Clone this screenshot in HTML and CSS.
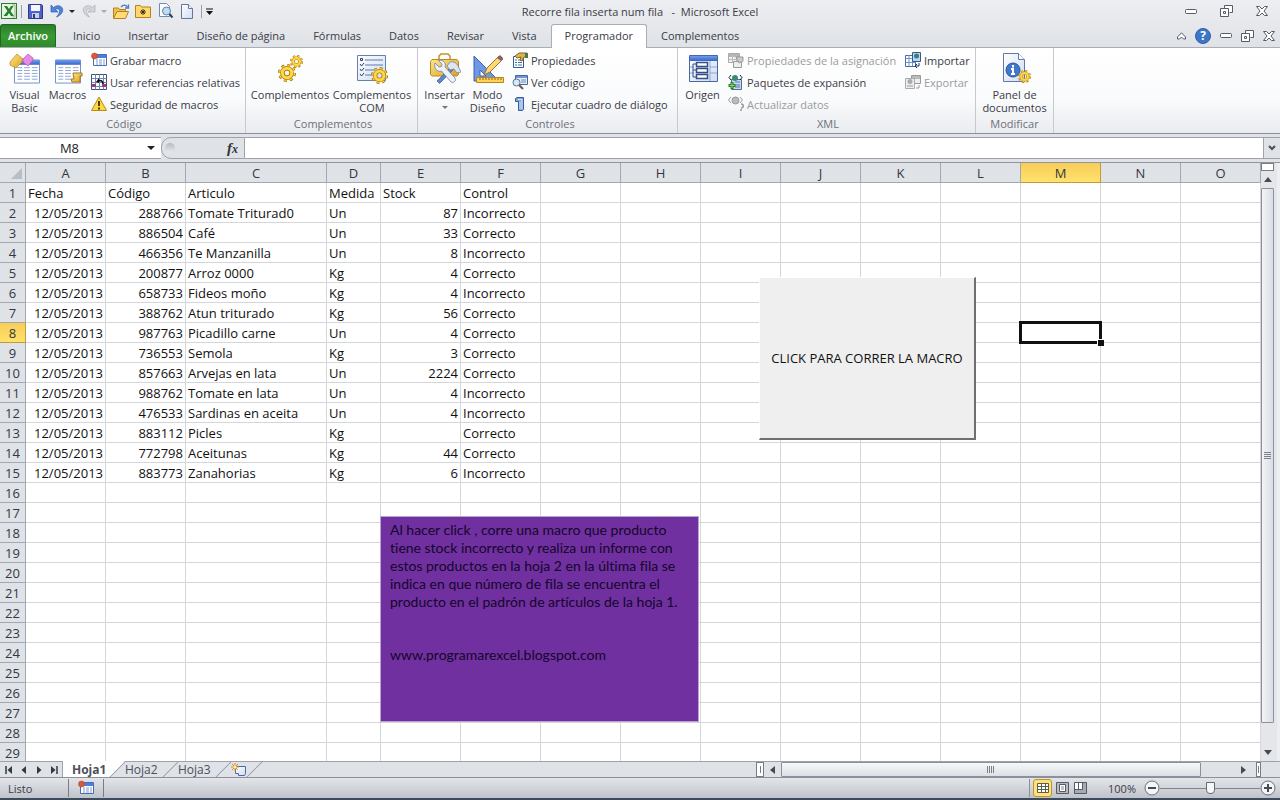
FILE: index.html
```html
<!DOCTYPE html>
<html lang="es">
<head>
  <meta charset="UTF-8">
  <meta name="viewport" content="width=device-width, initial-scale=1.0">
  <title>Recorre fila inserta num fila - Microsoft Excel</title>
  <link rel="stylesheet" href="styles.css">
</head>
<body>
  <!-- Shared icon shapes -->
  <svg class="defs" aria-hidden="true">
    <defs>
      <linearGradient id="blueBar" x1="0" y1="0" x2="0" y2="1"><stop offset="0" stop-color="#6f9df0"/><stop offset="1" stop-color="#3765c4"/></linearGradient>
      <linearGradient id="paper" x1="0" y1="0" x2="1" y2="1"><stop offset="0" stop-color="#ffffff"/><stop offset="1" stop-color="#cfdcf2"/></linearGradient>
      <linearGradient id="gold" x1="0" y1="0" x2="1" y2="1"><stop offset="0" stop-color="#ffe68a"/><stop offset="1" stop-color="#dba11f"/></linearGradient>
      <symbol id="gear" viewBox="0 0 18 18">
        <circle cx="9" cy="9" r="7" fill="none" stroke="#b07d0c" stroke-width="4" stroke-dasharray="2.8 2.7"/>
        <circle cx="9" cy="9" r="7" fill="none" stroke="#ffd84a" stroke-width="2" stroke-dasharray="2.2 3.3" stroke-dashoffset="-.3"/>
        <circle cx="9" cy="9" r="4.6" fill="none" stroke="#b07d0c" stroke-width="4.6"/>
        <circle cx="9" cy="9" r="4.7" fill="none" stroke="#ffd84a" stroke-width="3"/>
      </symbol>
      <symbol id="sheet" viewBox="0 0 28 26">
        <path d="M1 1h26v24H1z" fill="#fff" stroke="#7390c4"/>
        <path d="M1 1h26v5H1z" fill="url(#blueBar)"/>
        <path d="M4 9h5M11 9h6M19 9h6M4 12h5M11 12h6M19 12h6M4 15h5M11 15h6M19 15h6M4 18h5M11 18h6M19 18h6M4 21h5M11 21h6M19 21h6" stroke="#8aa3d6"/>
      </symbol>
      <symbol id="record" viewBox="0 0 16 16">
        <path d="M2.5 2.5h13v11h-13z" fill="#fff" stroke="#4b6cb0"/>
        <path d="M3 3h12v3H3z" fill="#4c7fdd"/>
        <path d="M5 8h2M8 8h3M12 8h2M5 10h2M8 10h3M12 10h2M5 12h2M8 12h3M12 12h2" stroke="#7d9ad8"/>
        <circle cx="3.5" cy="4" r="3" fill="#d9593a" stroke="#b7482c" stroke-width=".6"/>
      </symbol>
      <symbol id="restore" viewBox="0 0 13 12">
        <path d="M4.500 3.500v-3h8v7h-3" fill="#fff" stroke="#555b6b"/>
        <path d="M.5 3.500h8v8h-8z" fill="#fff" stroke="#555b6b"/>
        <path d="M3.500 6.500h2v2h-2z" fill="none" stroke="#555b6b"/>
      </symbol>
      <symbol id="cross" viewBox="0 0 12 10">
        <path d="M.5.5h3L6 3 8.500.5h3L8 5l3.500 4.500h-3L6 7 3.500 9.500h-3L4 5z" fill="#fff" stroke="#555b6b"/>
      </symbol>
      <symbol id="minimize" viewBox="0 0 12 5">
        <rect x=".5" y=".5" width="11" height="4" rx="1" fill="#fff" stroke="#555b6b"/>
      </symbol>
    </defs>
  </svg>

  <header class="titlebar">
    <div class="quick">
      <svg class="app-icon" width="16" height="16" viewBox="0 0 16 16"><rect x=".5" y=".5" width="15" height="15" fill="#e6f3e2" stroke="#2e7d32"/><path d="M11 2h3v12h-3" fill="none" stroke="#8cc084"/><path d="M3 3h3l2 3 2-3h2.500L9.500 8l3.500 5h-3L8 10l-2 3H2.500L6.500 8z" fill="#23802b"/></svg>
      <span class="sep"></span>
      <button class="save" aria-label="Guardar"><svg width="15" height="15" viewBox="0 0 15 15"><path d="M.5.5h13l1 1v13H.5z" fill="#5061c9" stroke="#2d3a8c"/><path d="M3 1h9v6H3z" fill="#f3f6ff"/><path d="M4 9h7v5H4z" fill="#c9d0ea"/><path d="M5 10h2v4H5z" fill="#2d3a8c"/></svg></button>
      <button class="undo" aria-label="Deshacer"><svg width="14" height="14" viewBox="0 0 14 14"><path d="M1 1v7h7L5.500 5.500C7.500 4 9.800 5 9.500 7.500 9.300 9.500 8 11 6.500 13c4-1.500 6.500-4.500 6.200-7.500C12.300 1.500 7 .5 3.500 3.500z" fill="#4f84d9" stroke="#2f5fb5" stroke-width=".7"/></svg></button>
      <span class="caret"></span>
      <button class="redo" aria-label="Rehacer"><svg width="14" height="14" viewBox="0 0 14 14"><path d="M13 1v7H6l2.500-2.500C6.500 4 4.200 5 4.500 7.500 4.700 9.500 6 11 7.500 13 3.500 11.500 1 8.500 1.300 5.500 1.700 1.500 7 .5 10.500 3.500z" fill="#d2d5da" stroke="#a9adb4" stroke-width=".7"/></svg></button>
      <span class="caret muted"></span>
      <button class="open" aria-label="Abrir"><svg width="17" height="15" viewBox="0 0 17 15"><path d="M.5 14V4h5l1 1.500h6V8" fill="#f0c04b" stroke="#b4831c"/><path d="M.5 14.500 4 7.500h11.500l-3 7z" fill="#ffdc78" stroke="#b4831c"/><path d="M8 3c2-2.500 5-2.500 6.500 0M15.500.500v3.500H12" fill="none" stroke="#4a7cc9" stroke-width="1.300"/></svg></button>
      <button class="folder" aria-label="Favoritos"><svg width="16" height="14" viewBox="0 0 16 14"><path d="M.5 13.500V1.500h5l1 1.500h9v10.500z" fill="#ffd76a" stroke="#b4831c"/><path d="M8 5v6M5 8h6M6 6l4 4M10 6l-4 4" stroke="#3a2a10"/></svg></button>
      <button class="preview" aria-label="Vista preliminar"><svg width="16" height="16" viewBox="0 0 16 16"><path d="M1.500.5h7l3 3v10h-10z" fill="#fff" stroke="#7489ab"/><circle cx="8.500" cy="8" r="4" fill="#bfdcf5" stroke="#5d7fae"/><path d="m11.500 11 3 3.500" stroke="#34445e" stroke-width="2"/></svg></button>
      <button class="blank" aria-label="Nuevo"><svg width="12" height="15" viewBox="0 0 12 15"><path d="M.5.500h7l4 4v10H.5z" fill="url(#paper)" stroke="#62779b"/><path d="M7.500.5v4h4" fill="#fff" stroke="#62779b"/></svg></button>
      <span class="sep"></span>
      <button class="custom" aria-label="Personalizar"><svg width="7" height="7" viewBox="0 0 7 7"><path d="M0 1h7" stroke="#111"/><path d="M0 3h7L3.500 7z" fill="#111"/></svg></button>
    </div>
    <h1>Recorre fila inserta num fila &nbsp; - &nbsp;Microsoft Excel</h1>
    <div class="window-buttons">
      <button aria-label="Minimizar"><svg width="12" height="5"><use href="#minimize"/></svg></button>
      <button aria-label="Restaurar"><svg width="13" height="12"><use href="#restore"/></svg></button>
      <button aria-label="Cerrar"><svg width="12" height="10"><use href="#cross"/></svg></button>
    </div>
  </header>

  <nav class="tabs">
    <button class="file-tab">Archivo</button>
    <button>Inicio</button>
    <button>Insertar</button>
    <button>Diseño de página</button>
    <button>Fórmulas</button>
    <button>Datos</button>
    <button>Revisar</button>
    <button>Vista</button>
    <button class="active">Programador</button>
    <button>Complementos</button>
    <div class="book-buttons">
      <button aria-label="Minimizar cinta"><svg width="9" height="8" viewBox="0 0 9 8"><path d="M.5 5 4.500.8 8.500 5v2h-2l-2-2-2 2h-2z" fill="#fff" stroke="#555b6b"/></svg></button>
      <button class="help" aria-label="Ayuda">?</button>
      <button aria-label="Minimizar libro"><svg width="12" height="5"><use href="#minimize"/></svg></button>
      <button aria-label="Restaurar libro"><svg width="13" height="12"><use href="#restore"/></svg></button>
      <button aria-label="Cerrar libro"><svg width="12" height="10"><use href="#cross"/></svg></button>
    </div>
  </nav>

  <section class="ribbon">
    <div class="group codigo">
      <div class="items">
        <button class="big"><svg width="32" height="32" viewBox="0 0 32 32"><use href="#sheet" x="4" y="6" width="28" height="25"/><path d="m1 9 7-8 6 5-1 3-6 6-6-3z" fill="url(#gold)" stroke="#b58320" stroke-width=".7"/><path d="m14 6 5-5 5 4v2l-5 6-5-4z" fill="#e58be6" stroke="#b355b8" stroke-width=".7"/></svg>Visual<br>Basic</button>
        <button class="big"><svg width="32" height="32" viewBox="0 0 32 32"><use href="#sheet" x="2" y="6" width="28" height="25"/><path d="M21 20h9v3h-2v6h-8l-1-3h3z" fill="url(#gold)" stroke="#a87820"/></svg>Macros</button>
        <div class="small-col">
          <button><svg width="16" height="16"><use href="#record"/></svg>Grabar macro</button>
          <button><svg width="16" height="16" viewBox="0 0 16 16"><path d="M.5.5h15v15H.5z" fill="#fff" stroke="#3e5078"/><path d="M.5 4.500h15M.5 8.500h15M.5 12.500h15M4.500.5v15M8.500.5v15M12.500.5v15" stroke="#7086b5"/><path d="M1 10h4v3H1zM11 10h4v3h-4z" fill="#993f76"/><path d="M7 7c3-1 5 0 5 3" fill="none" stroke="#111" stroke-width="1.500"/><path d="m5 8 3-4v5z" fill="#111"/></svg>Usar referencias relativas</button>
          <button><svg width="16" height="16" viewBox="0 0 16 16"><path d="M8 1 15.500 14.500H.5z" fill="#ffd83d" stroke="#b88b12" stroke-linejoin="round"/><path d="M8 5v5M8 11.500v2" stroke="#3a2c00" stroke-width="1.800"/></svg>Seguridad de macros</button>
        </div>
      </div>
      <h2>Código</h2>
    </div>
    <div class="group complementos">
      <div class="items">
        <button class="big wide"><svg width="32" height="32" viewBox="0 0 32 32"><use href="#gear" x="16" y="2" width="13" height="13"/><use href="#gear" x="4" y="11" width="18" height="18"/></svg>Complementos</button>
        <button class="big wide"><svg width="32" height="32" viewBox="0 0 32 32"><path d="M1.500 2.500h28v25h-28z" fill="url(#paper)" stroke="#6680ac"/><path d="M9 7h18M9 12h18M9 17h12M9 22h8" stroke="#5c79b0"/><path d="M4.500 5.500h2v2h-2zM4 11l1.500 2L8 10M4 16l1.500 2L8 15M4 21l1.500 2L8 20" fill="none" stroke="#2c4068"/><use href="#gear" x="15" y="14" width="17" height="17"/></svg>Complementos<br>COM</button>
      </div>
      <h2>Complementos</h2>
    </div>
    <div class="group controles">
      <div class="items">
        <button class="big"><svg width="32" height="32" viewBox="0 0 32 32"><path d="M10 6V3l2-2h7l2 2v3" fill="none" stroke="#c39226" stroke-width="1.500"/><path d="M3 6.500h25l1.500 2v13l-1.500 1.500H3L1.500 21.500v-13z" fill="url(#gold)" stroke="#bd891f"/><path d="m8 28 14-14 2.500 2.500-14 14z" fill="#5f86c8" stroke="#3f5c93" stroke-width=".7"/><path d="m18 13 3-4c4-1 7 1 9 6l2 4-4 1-3-4-4 1z" fill="#dfe5f0" stroke="#71829f" stroke-width=".8"/><path d="M6 10l4 4 2.500-.5.5-2.500-3.500-3.500c4.500-1 8 2 6.500 6.500L26 25c1.500 3-1.500 5.500-4 4L12.500 18C8 19.500 4.500 15 6 10z" fill="#edf2fa" stroke="#71829f" stroke-width=".8"/></svg>Insertar<span class="caret gray"></span></button>
        <button class="big"><svg width="32" height="32" viewBox="0 0 32 32"><path d="M2 3 27 28H2zM8 17v6h6z" fill="#6f98e4" fill-rule="evenodd" stroke="#3b63b0"/><path d="M4.500 24.500h27v5h-27z" fill="#ffd156" stroke="#ba861c"/><path d="M8 25v2M11 25v2M14 25v2M17 25v2M20 25v2M23 25v2M26 25v2M29 25v2" stroke="#8e6514"/><path d="m12 22 3-7L27 3l4 3-13 13z" fill="#ffd775" stroke="#96732b"/><path d="m25 5 4 3 2-3-3-3z" fill="#84616a"/></svg>Modo<br>Diseño</button>
        <div class="small-col">
          <button><svg width="16" height="16" viewBox="0 0 16 16"><path d="M1.500 4.500h10v11h-10z" fill="#fff" stroke="#345b89"/><path d="M3 8h2M6 8h4M3 10.500h2M6 10.500h4M3 13h2M6 13h4" stroke="#426d9f"/><path d="M3 4 7 1h8v4h-3l-2 4-2-1 1-3-4 1z" fill="#e2b24b" stroke="#80632a"/><path d="M13 1h3v5h-3z" fill="#467b4b"/></svg>Propiedades</button>
          <button><svg width="16" height="16" viewBox="0 0 16 16"><path d="M3.500 1.500h12v9h-12z" fill="#e8effb" stroke="#466699"/><path d="M4 2h11v2H4z" fill="#6f96d5"/><path d="M9 6h5M9 8h5" stroke="#6987b8"/><circle cx="4.500" cy="8.500" r="3.500" fill="#d7e9fa" stroke="#5b7498"/><path d="m7 11 4 4" stroke="#705343" stroke-width="2"/></svg>Ver código</button>
          <button><svg width="16" height="16" viewBox="0 0 16 16"><path d="M3.500 2.500 5 1.500h6.500v12l-1.500 1H6.500v-9h-3z" fill="#7da3dd" stroke="#3a5c94"/><path d="M8 5.500v8M6 3.500h4v10" fill="none" stroke="#dce8fa"/></svg>Ejecutar cuadro de diálogo</button>
        </div>
      </div>
      <h2>Controles</h2>
    </div>
    <div class="group xml">
      <div class="items">
        <button class="big"><svg width="32" height="32" viewBox="0 0 32 32"><path d="M2.500 2.500h28v26h-28z" fill="url(#paper)" stroke="#4767a5"/><path d="M3 3h27v5H3z" fill="url(#blueBar)"/><path d="M23 8v20M23 14h7M23 20h7M3 14h4M3 20h4" stroke="#8ca6d5"/><path d="M9.500 9.500h11v4h-11zM9.500 15.500h11v4h-11zM9.500 21.500h11v4h-11z" fill="#fff" stroke="#344f83" stroke-width="1.500"/><path d="M6 11v13M6 11h3M6 17h3M6 24h3" stroke="#344f83"/></svg>Origen</button>
        <div class="small-col xml-left">
          <button disabled><svg width="16" height="16" viewBox="0 0 16 16"><path d="M.5 1.500h11v9H.5z" fill="#f1f1f1" stroke="#aaa"/><path d="M1 2h10v3H1z" fill="#b5b5b5"/><path d="M1 7.500h10M4.500 2v8M8.500 2v8" stroke="#bbb"/><path d="M5.500 9.500h8v6h-8z" fill="#eee" stroke="#9b9b9b"/><path d="M8 5h7v4l-4 2z" fill="#ccc" stroke="#999"/></svg>Propiedades de la asignación</button>
          <button><svg width="16" height="16" viewBox="0 0 16 16"><path d="M3.500 5.500h10v10h-10z" fill="#c7d8f1" stroke="#4d6c9d"/><path d="M7 8h5M7 11h5M7 13h5" stroke="#5a78ab"/><circle cx="7" cy="4" r="3" fill="#388c77"/><path d="M3 1 1 3.500 3 6M12 1l2 2.500L12 6" fill="none" stroke="#222"/><path d="M4 8v7M.5 11.500h7" stroke="#287b27" stroke-width="3"/><path d="M4 9v5M1.500 11.500h5" stroke="#8edb55"/></svg>Paquetes de expansión</button>
          <button disabled><svg width="16" height="16" viewBox="0 0 16 16"><path d="M3 1 .5 4 3 7M12 1l2.500 3L12 7" fill="none" stroke="#999"/><circle cx="7.500" cy="4.500" r="3.500" fill="#bbb" stroke="#999"/><path d="M13 8c3 0 3 4 0 4M13 13v2" fill="none" stroke="#999" stroke-width="1.500"/></svg>Actualizar datos</button>
        </div>
        <div class="small-col">
          <button><svg width="16" height="16" viewBox="0 0 16 16"><path d="M.5 3.500h10v11H.5z" fill="#fff" stroke="#426da8"/><path d="M.5 6.500h10M.5 10.500h10M4 3v11M7.500 3v11" stroke="#6c96ce"/><path d="M7.500.5h8v9h-8z" fill="#bed6ef" stroke="#325a8f"/><circle cx="11.500" cy="4" r="2.500" fill="#377f79"/><path d="M14 11v3h-4M12 12l-2 2 2 2" fill="none" stroke="#1e3358"/></svg>Importar</button>
          <button disabled><svg width="16" height="16" viewBox="0 0 16 16"><path d="M6.500 1.500h9v8h-9z" fill="#eee" stroke="#999"/><path d="M7 2h8v3H7z" fill="#bbb"/><path d="M.5 4.500h9v10h-9z" fill="#eee" stroke="#aaa"/><circle cx="5" cy="7.500" r="2.500" fill="#aaa"/><path d="M2 12h6M14 11v3h-3" fill="none" stroke="#999"/></svg>Exportar</button>
        </div>
      </div>
      <h2>XML</h2>
    </div>
    <div class="group modificar">
      <div class="items">
        <button class="big panel"><svg width="32" height="32" viewBox="0 0 32 32"><path d="M4.500.5h15l6 6v22h-21z" fill="url(#paper)" stroke="#607ba8"/><path d="M19.500.5v6h6" fill="#fff" stroke="#607ba8"/><circle cx="14" cy="17" r="7" fill="#3f78cc" stroke="#2c559c"/><path d="M14 12v2.500M12 16h2v5M12 21h4" fill="none" stroke="#fff" stroke-width="2"/><use href="#gear" x="19" y="17" width="13" height="13"/></svg>Panel de<br>documentos</button>
      </div>
      <h2>Modificar</h2>
    </div>
  </section>

  <div class="formula-bar">
    <div class="name-box">
      <input type="text" value="M8" aria-label="Cuadro de nombres">
      <span class="caret"></span>
    </div>
    <div class="fx"><span class="knob"></span><button aria-label="Insertar función"><i>f</i><i class="x">x</i></button></div>
    <input class="formula" type="text" aria-label="Barra de fórmulas">
    <button class="expand" aria-label="Expandir"><svg width="8" height="6" viewBox="0 0 8 6"><path d="m1 1 3 3 3-3" fill="none" stroke="#4a4f58" stroke-width="2"/></svg></button>
  </div>

  <main class="workbook">
    <div class="grid-area" id="gridArea">
      <table class="grid">
        <colgroup id="cols"></colgroup>
        <thead><tr id="letters"></tr></thead>
        <tbody id="rows"></tbody>
      </table>
      <button class="macro-button">CLICK PARA CORRER LA MACRO</button>
      <div class="note">
        <p>Al hacer click , corre una macro que producto<br>tiene stock incorrecto y realiza un informe con<br>estos productos en la hoja 2 en la última fila se<br>indica en que número de fila se encuentra el<br>producto en el padrón de artículos de la hoja 1.</p>
        <p>www.programarexcel.blogspot.com</p>
      </div>
    </div>
    <div class="v-scroll">
      <span class="split"></span>
      <button aria-label="Arriba"><span class="arrow up"></span></button>
      <div class="thumb"><span class="grip"></span></div>
      <button aria-label="Abajo"><span class="arrow down"></span></button>
    </div>
  </main>

  <div class="sheet-bar">
    <div class="sheet-nav">
      <button aria-label="Primera hoja"><svg width="8" height="8" viewBox="0 0 8 8"><path d="M1 0v8" stroke="#333a45" stroke-width="1.500"/><path d="M7 0v8L2.500 4z" fill="#333a45"/></svg></button>
      <button aria-label="Hoja anterior"><svg width="8" height="8" viewBox="0 0 8 8"><path d="M6 0v8L1.500 4z" fill="#333a45"/></svg></button>
      <button aria-label="Hoja siguiente"><svg width="8" height="8" viewBox="0 0 8 8"><path d="M2 0v8l4.500-4z" fill="#333a45"/></svg></button>
      <button aria-label="Última hoja"><svg width="8" height="8" viewBox="0 0 8 8"><path d="M7 0v8" stroke="#333a45" stroke-width="1.500"/><path d="M1 0v8l4.500-4z" fill="#333a45"/></svg></button>
    </div>
    <button class="sheet-tab active">Hoja1</button>
    <button class="sheet-tab">Hoja2</button>
    <button class="sheet-tab">Hoja3</button>
    <button class="sheet-tab new" aria-label="Insertar hoja"><svg width="16" height="14" viewBox="0 0 16 14"><path d="M4.500 3.500h10v7l-1 2h-6v-2h-3z" fill="url(#paper)" stroke="#4a6aa5"/><path d="M4 0v8M0 4h8M1 1l6 6M7 1 1 7" stroke="#d98f22"/><circle cx="4" cy="4" r="1.500" fill="#fff0a8"/></svg></button>
    <div class="h-scroll">
      <span class="split"></span>
      <button aria-label="Izquierda"><span class="arrow left"></span></button>
      <div class="thumb"><span class="grip"></span></div>
      <button class="right-button" aria-label="Derecha"><span class="arrow right"></span></button>
      <span class="split end"></span>
    </div>
  </div>

  <footer class="status">
    <span class="ready">Listo</span>
    <button class="record" aria-label="Grabar macro"><svg width="16" height="16"><use href="#record"/></svg></button>
    <div class="views">
      <button class="on" aria-label="Normal"><svg width="12" height="10" viewBox="0 0 12 10"><path d="M.5.500h11v9H.5zM.5 3.500h11M.5 6.500h11M4.500.5v9M8.500.5v9" fill="#fff" stroke="#5a5f4c"/></svg></button>
      <button aria-label="Diseño de página"><svg width="13" height="12" viewBox="0 0 13 12"><path d="M.5.5h12v11H.5z" fill="#b5b9c1" stroke="#555b66"/><path d="M3.500 2.500h6v7h-6z" fill="#fff" stroke="#555b66"/><path d="M5 5h3M5 7h3" stroke="#888"/></svg></button>
      <button aria-label="Salto de página"><svg width="13" height="12" viewBox="0 0 13 12"><path d="M.5.5h12v11H.5z" fill="#a5aab3" stroke="#555b66"/><path d="M1 1h3v6H1zM5 1h3v6H5z" fill="#fff"/><path d="M4.500 1v6M8.500 1v6.500H1" fill="none" stroke="#555b66"/></svg></button>
    </div>
    <span class="percent">100%</span>
    <button class="round" aria-label="Alejar"><svg width="16" height="16" viewBox="0 0 16 16"><circle cx="8" cy="8" r="7" fill="#f4f5f7" stroke="#6a707b"/><path d="M4 8h8" stroke="#444a55" stroke-width="2"/></svg></button>
    <input class="zoom" type="range" min="0" max="100" value="50" aria-label="Zoom">
    <button class="round" aria-label="Acercar"><svg width="16" height="16" viewBox="0 0 16 16"><circle cx="8" cy="8" r="7" fill="#f4f5f7" stroke="#6a707b"/><path d="M4 8h8M8 4v8" stroke="#444a55" stroke-width="2"/></svg></button>
  </footer>

  <script>
    const data = [
      ["Fecha", "Código", "Articulo", "Medida", "Stock", "Control"],
      ["12/05/2013", 288766, "Tomate Triturad0", "Un", 87, "Incorrecto"],
      ["12/05/2013", 886504, "Café", "Un", 33, "Correcto"],
      ["12/05/2013", 466356, "Te Manzanilla", "Un", 8, "Incorrecto"],
      ["12/05/2013", 200877, "Arroz 0000", "Kg", 4, "Correcto"],
      ["12/05/2013", 658733, "Fideos moño", "Kg", 4, "Incorrecto"],
      ["12/05/2013", 388762, "Atun triturado", "Kg", 56, "Correcto"],
      ["12/05/2013", 987763, "Picadillo carne", "Un", 4, "Correcto"],
      ["12/05/2013", 736553, "Semola", "Kg", 3, "Correcto"],
      ["12/05/2013", 857663, "Arvejas en lata", "Un", 2224, "Correcto"],
      ["12/05/2013", 988762, "Tomate en lata", "Un", 4, "Incorrecto"],
      ["12/05/2013", 476533, "Sardinas en aceita", "Un", 4, "Incorrecto"],
      ["12/05/2013", 883112, "Picles", "Kg", "", "Correcto"],
      ["12/05/2013", 772798, "Aceitunas", "Kg", 44, "Correcto"],
      ["12/05/2013", 883773, "Zanahorias", "Kg", 6, "Incorrecto"]
    ];
    const selected = { col: 12, row: 7 };
    const widths = { 2: "col-wide", 3: "col-narrow" };

    // Fill the visible area with rows and columns
    const area = document.getElementById("gridArea");
    const colCount = Math.max(13, Math.ceil((area.clientWidth - 26 - 35) / 80));
    const rowCount = Math.max(15, Math.ceil((area.clientHeight - 20) / 20));

    let cols = '<col class="col-head">';
    let letters = '<th class="corner"></th>';
    for (let c = 0; c < colCount; c++) {
      cols += `<col class="${widths[c] || "col"}">`;
      letters += `<th class="${c === selected.col ? "on" : ""}">${String.fromCharCode(65 + c)}</th>`;
    }
    document.getElementById("cols").innerHTML = cols;
    document.getElementById("letters").innerHTML = letters;

    let rows = "";
    for (let r = 0; r < rowCount; r++) {
      rows += `<tr><th class="${r === selected.row ? "on" : ""}">${r + 1}</th>`;
      for (let c = 0; c < colCount; c++) {
        const value = data[r] && data[r][c] !== undefined ? data[r][c] : "";
        const right = r > 0 && (c === 0 || typeof value === "number");
        const cursor = r === selected.row && c === selected.col;
        rows += `<td class="${right ? "num" : ""}${cursor ? "cursor" : ""}">${value}</td>`;
      }
      rows += "</tr>";
    }
    document.getElementById("rows").innerHTML = rows;
  </script>
</body>
</html>
```
FILE: styles.css
```css
* {
  box-sizing: border-box;
}
body {
  margin: 0;
  height: 100vh;
  display: flex;
  flex-direction: column;
  overflow: hidden;
  font-family: "Open Sans", "Noto Sans", sans-serif;
  font-size: 11px;
  color: #3b3b47;
  background: #dfe2e7;
}
button {
  font: inherit;
  color: inherit;
  background: none;
  border: 0;
  padding: 0;
  margin: 0;
}
h1, h2, p {
  margin: 0;
  font-weight: normal;
}
svg {
  display: block;
  flex: none;
}
.defs {
  position: absolute;
  width: 0;
  height: 0;
}
.caret {
  width: 0;
  border: 4px solid transparent;
  border-top-color: #222;
  border-bottom: 0;
}
.quick .caret {
  border-width: 3px 3px 0;
}
.caret.muted {
  border-top-color: #a4a8af;
}
.caret.gray {
  border-width: 3px 3px 0;
  border-top-color: #777;
  margin: 5px auto 0;
}

/* Title bar */
.titlebar {
  display: grid;
  grid-template-columns: 1fr auto 1fr;
  align-items: center;
  height: 24px;
  flex: none;
  padding-bottom: 2px;
  background: linear-gradient(#eceef1, #e6e8ec);
}
.titlebar h1 {
  font-size: 11px;
}
.quick {
  display: flex;
  align-items: center;
  padding-left: 1px;
}
.sep {
  width: 1px;
  height: 13px;
  background: #9a9fa8;
}
.app-icon {
  margin-right: 4px;
}
.save {
  margin-left: 6px;
}
.undo {
  margin: 0 5px 0 7px;
}
.redo {
  margin: 0 5px 0 7px;
}
.open {
  margin-left: 6px;
}
.folder {
  margin-left: 5px;
}
.preview {
  margin-left: 7px;
}
.blank {
  margin: 0 8px 0 7px;
}
.custom {
  margin-left: 4px;
}
.window-buttons {
  display: flex;
  align-items: center;
  justify-content: flex-end;
  gap: 23px;
  padding-right: 12px;
}

/* Tabs */
.tabs {
  display: flex;
  height: 24px;
  flex: none;
  background: linear-gradient(#e6e8ec, #dfe2e6);
  border-bottom: 1px solid #a9adb5;
}
.tabs > button {
  padding: 0 14px;
  height: 23px;
}
.tabs > .file-tab {
  width: 56px;
  padding: 0 0 2px;
  margin-right: 3px;
  color: #fff;
  font-weight: 600;
  background: linear-gradient(#2d7d2b, #3a9a33 50%, #2f8a2a);
  border: 1px solid #1f6a23;
  border-bottom: 0;
  border-radius: 3px 3px 0 0;
}
.tabs > .active {
  height: 24px;
  padding: 0 13px 2px;
  background: #fff;
  border: 1px solid #a9adb5;
  border-bottom: 0;
  border-radius: 3px 3px 0 0;
}
.book-buttons {
  display: flex;
  align-items: center;
  gap: 9px;
  margin-left: auto;
  padding-right: 5px;
}
.help {
  width: 16px;
  height: 16px;
  border-radius: 50%;
  background: #3c77c7;
  border: 1px solid #2f60a8;
  color: #fff;
  font-size: 12px;
  font-weight: 700;
  line-height: 14px;
}

/* Ribbon */
.ribbon {
  display: flex;
  height: 86px;
  flex: none;
  background: linear-gradient(#fff, #fafbfc 60%, #e9ebef);
  border-bottom: 1px solid #8b909a;
}
.group {
  display: flex;
  flex-direction: column;
  border-right: 1px solid #c6c9cf;
  padding: 1px 0 0 3px;
}
.group h2 {
  font-size: 11px;
  line-height: 18px;
  text-align: center;
  color: #6d7079;
}
.items {
  display: flex;
  align-items: flex-start;
  height: 68px;
}
.codigo {
  width: 246px;
}
.complementos {
  width: 172px;
}
.controles {
  width: 260px;
  padding-left: 5px;
}
.xml {
  width: 298px;
}
.modificar {
  width: 78px;
  padding-left: 0;
}
.big {
  display: flex;
  flex-direction: column;
  align-items: center;
  width: 43px;
  padding-top: 4px;
  line-height: 13px;
  white-space: nowrap;
}
.big svg {
  margin-bottom: 3px;
}
.big.wide {
  width: 82px;
}
.big.panel {
  width: 77px;
}
.small-col {
  display: flex;
  flex-direction: column;
  margin-left: 2px;
}
.small-col button {
  display: flex;
  align-items: center;
  gap: 3px;
  height: 22px;
  white-space: nowrap;
}
.small-col button:disabled {
  color: #9b9b9f;
}
.controles .small-col {
  margin-left: 3px;
}
.small-col.xml-left {
  width: 175px;
  margin-left: 4px;
}

/* Formula bar */
.formula-bar {
  display: flex;
  height: 26px;
  flex: none;
  margin: 3px 0 0;
  padding-bottom: 3px;
  border-bottom: 1px solid #8f949d;
}
.formula-bar > * {
  border: 0 solid #9da2ab;
  border-width: 1px 0;
}
.name-box {
  display: flex;
  align-items: center;
  width: 161px;
  padding-right: 6px;
  background: #fff;
}
.name-box input {
  flex: 1;
  min-width: 0;
  border: 0;
  padding: 0 8px 0 0;
  font: 13px "Open Sans", sans-serif;
  color: #222;
  text-align: center;
}
.fx {
  display: flex;
  align-items: center;
  justify-content: space-between;
  width: 84px;
  padding: 0 6px 0 3px;
  background: #dfe2e7;
  border-left-width: 1px;
  border-right-width: 1px;
  border-radius: 10px 0 0 10px;
}
.knob {
  width: 10px;
  height: 10px;
  border-radius: 50%;
  background: linear-gradient(#b7bcc4, #e9ebee);
}
.fx button {
  font: bold 15px "Liberation Serif", serif;
  color: #333;
}
.fx .x {
  font-size: 12px;
}
.formula {
  flex: 1;
  min-width: 0;
  background: #fff;
}
.expand {
  display: flex;
  align-items: center;
  justify-content: center;
  width: 17px;
  border-left-width: 1px;
}

/* Grid */
.workbook {
  display: flex;
  flex: 1;
  min-height: 0;
}
.grid-area {
  position: relative;
  flex: 1;
  min-width: 0;
  overflow: hidden;
  background: #fff;
}
.grid {
  table-layout: fixed;
  width: 0;
  border-collapse: separate;
  border-spacing: 0;
  font-size: 13px;
  line-height: 17px;
  color: #111;
}
.col-head {
  width: 26px;
}
.col {
  width: 80px;
}
.col-wide {
  width: 141px;
}
.col-narrow {
  width: 54px;
}
.grid th,
.grid td {
  height: 20px;
  padding: 2px 2px 0;
  border-right: 1px solid #d4d6d9;
  border-bottom: 1px solid #d4d6d9;
  white-space: nowrap;
  text-align: left;
}
.grid th {
  padding: 2px 0 0;
  font-weight: normal;
  text-align: center;
  color: #33373f;
  background: #dfe2e7;
  border-color: #a3a8b0;
}
.grid .on {
  background: linear-gradient(#f8cd5a, #ffe26b);
  border-color: #c39a3b;
}
.grid .num {
  text-align: right;
}
.corner::before {
  content: "";
  display: block;
  width: 11px;
  height: 11px;
  margin-left: 11px;
  background: #b9bec6;
  clip-path: polygon(100% 0, 100% 100%, 0 100%);
}
.cursor {
  position: relative;
}
.cursor::before {
  content: "";
  position: absolute;
  inset: -2px;
  border: 3px solid #111;
}
.cursor::after {
  content: "";
  position: absolute;
  right: -4px;
  bottom: -4px;
  width: 6px;
  height: 6px;
  background: #111;
  border: 1px solid #fff;
  border-width: 1px 0 0 1px;
}
.macro-button {
  position: absolute;
  left: 759px;
  top: 114px;
  width: 217px;
  height: 163px;
  background: #efefef;
  border: 1px solid #fff;
  border-right: 2px solid #6f6f6f;
  border-bottom: 2px solid #6f6f6f;
  font-size: 13px;
  color: #111;
}
.note {
  position: absolute;
  left: 380px;
  top: 353px;
  width: 319px;
  height: 206px;
  padding: 4px 9px;
  background: #7030a0;
  border: 1px solid #b9a3cf;
  font-family: Lato, sans-serif;
  font-size: 14px;
  font-variant-ligatures: none;
  line-height: 18px;
  color: #14062b;
  white-space: nowrap;
}
.note p + p {
  margin-top: 35px;
}

/* Scroll bars */
.v-scroll {
  display: flex;
  flex-direction: column;
  width: 19px;
  padding-right: 3px;
  background: #e4e6ea;
  border-right: 3px solid #eceef1;
}
.v-scroll .split {
  height: 8px;
  border: 1px solid #777c86;
  background: #fff;
}
.v-scroll button {
  display: flex;
  align-items: center;
  justify-content: center;
  height: 17px;
}
.v-scroll button:last-child {
  height: 18px;
  margin-top: 20px;
}
.thumb {
  display: flex;
  align-items: center;
  justify-content: center;
  flex: 1;
  border: 1px solid #8b909a;
  border-radius: 1px;
  background: linear-gradient(90deg, #f3f4f7, #d9dde4);
}
.grip {
  width: 7px;
  height: 8px;
  background: repeating-linear-gradient(#7b808a 0 1px, transparent 1px 2px);
}
.arrow {
  width: 0;
  height: 0;
  border: 4px solid transparent;
}
.up {
  border-top: 0;
  border-bottom: 5px solid #454a54;
}
.down {
  border-bottom: 0;
  border-top: 5px solid #454a54;
}
.left {
  border-left: 0;
  border-right: 5px solid #454a54;
}
.right {
  border-right: 0;
  border-left: 5px solid #454a54;
}

/* Sheet tabs */
.sheet-bar {
  display: flex;
  height: 17px;
  flex: none;
  padding-right: 19px;
  background: #dfe2e7;
  border-top: 1px solid #9da2ab;
  border-bottom: 1px solid #8b909a;
}
.sheet-nav {
  display: flex;
  align-items: center;
  gap: 7px;
  width: 63px;
  padding-left: 5px;
  border-right: 1px solid #9da2ab;
}
.sheet-tab {
  position: relative;
  z-index: 1;
  width: 53px;
  padding-left: 7px;
  font-size: 12px;
  line-height: 15px;
  text-align: left;
  color: #4b505a;
}
.sheet-tab::after {
  content: "";
  position: absolute;
  right: 0;
  top: 0;
  width: 1px;
  height: 15px;
  background: #8b909a;
  transform: skewX(-45deg);
}
.sheet-tab.active {
  width: 55px;
  padding-left: 9px;
  font-weight: 700;
}
.sheet-tab.active::before {
  content: "";
  position: absolute;
  z-index: -1;
  inset: -1px -7px 0 0;
  background: #fff;
  clip-path: polygon(0 0, 100% 0, calc(100% - 15px) 100%, 0 100%);
}
.sheet-tab.new {
  width: 31px;
}
.h-scroll {
  display: flex;
  align-items: stretch;
  width: 505px;
  margin-left: auto;
}
.h-scroll .split {
  width: 8px;
  border: 1px solid #777c86;
  background: linear-gradient(#777c86, #777c86) center / 1px 7px no-repeat #fff;
}
.h-scroll .split.end {
  width: 5px;
}
.h-scroll button {
  display: flex;
  align-items: center;
  justify-content: center;
  width: 17px;
}
.h-scroll .right-button {
  margin-left: 34px;
  margin-right: 4px;
}
.h-scroll .thumb {
  background: linear-gradient(#f6f7f9, #dce0e6);
}
.h-scroll .grip {
  width: 8px;
  height: 7px;
  background: repeating-linear-gradient(90deg, #7b808a 0 1px, transparent 1px 2px);
}

/* Status bar */
.status {
  display: flex;
  align-items: center;
  height: 22px;
  flex: none;
  padding-right: 4px;
  background: linear-gradient(#e3e5e9, #bfc3ca);
  border-bottom: 2px solid #3c4a5c;
}
.ready {
  width: 68px;
  padding-left: 8px;
}
.record {
  display: flex;
  align-items: center;
  justify-content: center;
  width: 36px;
  height: 18px;
  border: 1px solid #777c86;
  border-width: 0 1px;
}
.views {
  display: flex;
  align-items: center;
  gap: 3px;
  height: 18px;
  margin-left: auto;
  padding-left: 3px;
  border-left: 1px solid #8b909a;
}
.views button {
  display: flex;
  align-items: center;
  justify-content: center;
  width: 15px;
  height: 18px;
}
.views .on {
  width: 19px;
  background: #ffe17a;
  border: 1px solid #c2932c;
  border-radius: 3px;
}
.percent {
  width: 56px;
  padding-left: 12px;
  text-align: center;
}
.zoom {
  appearance: none;
  width: 100px;
  height: 16px;
  margin: 0;
  background: linear-gradient(#7f858f, #7f858f) center / 100% 1px no-repeat;
}
.zoom::-webkit-slider-thumb {
  appearance: none;
  width: 9px;
  height: 12px;
  background: #f6f7f9;
  border: 1px solid #646a75;
  border-radius: 1px 1px 5px 5px;
}
.round {
  width: 16px;
}
```
